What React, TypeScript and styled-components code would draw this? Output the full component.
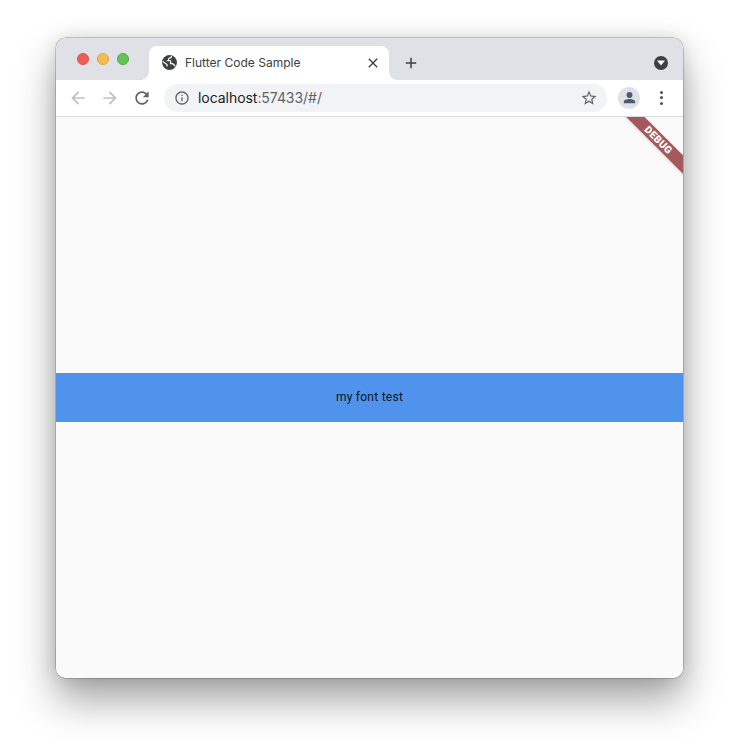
import React from "react";
import styled, { createGlobalStyle } from "styled-components";

const Global = createGlobalStyle`
  html, body { margin: 0; padding: 0; background: #fff; }
  body { width: 739px; height: 752px; overflow: hidden; font-family: Inter, "Liberation Sans", sans-serif; }
`;
const Page = styled.div`
  padding: 38px 0 0 56px;
`;
const Window = styled.div`
  width: 627px;
  height: 640px;
  border-radius: 10px;
  overflow: hidden;
  display: flex;
  flex-direction: column;
  background: #fafafa;
  box-shadow: 0 0 0 0.5px rgba(0,0,0,.35), 0 22px 40px rgba(0,0,0,.36), 0 0 18px rgba(0,0,0,.13);
`;
const TabStrip = styled.div`
  height: 42px;
  flex: none;
  background: #dfe1e6;
  display: flex;
  align-items: flex-end;
  padding-left: 21px;
  padding-right: 15px;
`;
const Lights = styled.div`
  display: flex;
  gap: 8px;
  align-self: flex-start;
  margin-top: 15px;
  width: 72px;
`;
const Light = styled.span<{ $c: string; $b: string }>`
  width: 12px;
  height: 12px;
  box-sizing: border-box;
  border-radius: 50%;
  background: ${p => p.$c};
  border: 0.5px solid ${p => p.$b};
`;
const Tab = styled.div`
  position: relative;
  width: 240px;
  height: 34px;
  box-sizing: border-box;
  background: #fff;
  border-radius: 8px 8px 0 0;
  display: flex;
  align-items: center;
  padding: 0 8px 1px 12px;
  color: #3c4043;
  &::before, &::after {
    content: "";
    position: absolute;
    bottom: 0;
    width: 8px;
    height: 8px;
    background: radial-gradient(circle at var(--cx) 0, #dfe1e6 7.5px, #fff 8px);
  }
  &::before { left: -8px; --cx: 0; }
  &::after { right: -8px; --cx: 100%; }
`;
const TabTitle = styled.span`
  flex: 1;
  margin-left: 7px;
  font-size: 12px;
  letter-spacing: 0.01px;
  white-space: nowrap;
`;
const Icon = styled.svg<{ $s?: number; $c?: string }>`
  width: ${p => p.$s ?? 16}px;
  height: ${p => p.$s ?? 16}px;
  fill: ${p => p.$c ?? "#5f6368"};
  flex: none;
  display: block;
`;
const NewTab = styled.div`
  margin-left: 13px;
  align-self: flex-start;
  margin-top: 16px;
  width: 18px;
  height: 18px;
`;
const Spring = styled.div`
  flex: 1;
`;
const Dropdown = styled.div`
  align-self: flex-start;
  margin-top: 18px;
  width: 14px;
  height: 14px;
  border-radius: 50%;
  background: #3c4043;
  display: flex;
  align-items: center;
  justify-content: center;
`;
const Toolbar = styled.div`
  height: 37px;
  flex: none;
  box-sizing: border-box;
  background: #fff;
  border-bottom: 1px solid #dadce0;
  display: flex;
  align-items: center;
  padding: 0 12px 1px 12px;
`;
const NavGroup = styled.div`
  display: flex;
  gap: 12px;
  margin-right: 12px;
`;
const Omnibox = styled.div`
  width: 443px;
  height: 28px;
  border-radius: 14px;
  background: #f1f3f4;
  display: flex;
  align-items: center;
  padding: 0 9px 0 10px;
  box-sizing: border-box;
`;
const Url = styled.span`
  flex: 1;
  margin-left: 8px;
  font-size: 14px;
  letter-spacing: -0.05px;
  color: #202124;
  white-space: nowrap;
`;
const UrlRest = styled.span`
  color: #5f6368;
`;
const Avatar = styled.div`
  width: 22px;
  height: 22px;
  margin-left: 11px;
  border-radius: 50%;
  background: #dfe1e6;
  display: flex;
  align-items: center;
  justify-content: center;
`;
const Kebab = styled.div`
  margin-left: 20px;
  display: flex;
  flex-direction: column;
  gap: 2.5px;
`;
const Dot = styled.span`
  width: 3px;
  height: 3px;
  border-radius: 50%;
  background: #50545a;
`;
const Content = styled.main`
  position: relative;
  flex: 1;
  overflow: hidden;
  background: #fafafa;
  display: flex;
  align-items: center;
`;
const Band = styled.div`
  width: 100%;
  height: 49px;
  box-sizing: border-box;
  padding-bottom: 2px;
  background: #5093ec;
  color: #0b1320;
  display: flex;
  align-items: center;
  justify-content: center;
  font-family: Roboto, sans-serif;
  font-size: 12px;
  letter-spacing: 0.25px;
`;
const Ribbon = styled.div`
  position: absolute;
  right: -36px;
  top: 17px;
  width: 120px;
  height: 12.7px;
  box-sizing: border-box;
  padding-right: 1px;
  background: #a45a5c;
  transform: rotate(45deg);
  color: #fff;
  font-family: Roboto, sans-serif;
  font-weight: 900;
  font-size: 10.2px;
  letter-spacing: 0.4px;
  line-height: 14px;
  text-align: center;
  box-shadow: 0 1px 3px rgba(0,0,0,.12);
`;

const P = {
  close: "M19 6.41L17.59 5 12 10.59 6.41 5 5 6.41 10.59 12 5 17.59 6.41 19 12 13.41 17.59 19 19 17.59 13.41 12z",
  plus: "M19 13h-6v6h-2v-6H5v-2h6V5h2v6h6v2z",
  back: "M20 11H7.83l5.59-5.59L12 4l-8 8 8 8 1.41-1.41L7.83 13H20v-2z",
  fwd: "M12 4l-1.41 1.41L16.17 11H4v2h12.17l-5.58 5.59L12 20l8-8z",
  reload: "M17.65 6.35C16.2 4.9 14.21 4 12 4c-4.42 0-7.99 3.58-7.99 8s3.57 8 7.99 8c3.73 0 6.84-2.55 7.73-6h-2.08c-.82 2.33-3.04 4-5.65 4-3.31 0-6-2.69-6-6s2.69-6 6-6c1.66 0 3.14.69 4.22 1.78L13 11h7V4l-2.35 2.35z",
  info: "M11 7h2v2h-2zm0 4h2v6h-2zm1-9C6.48 2 2 6.48 2 12s4.48 10 10 10 10-4.48 10-10S17.52 2 12 2zm0 18c-4.41 0-8-3.59-8-8s3.59-8 8-8 8 3.59 8 8-3.59 8-8 8z",
  star: "M22 9.24l-7.19-.62L12 2 9.19 8.63 2 9.24l5.46 4.73L5.82 21 12 17.27 18.18 21l-1.63-7.03L22 9.24zM12 15.4l-3.76 2.27 1-4.28-3.32-2.88 4.38-.38L12 6.1l1.71 4.04 4.38.38-3.32 2.88 1 4.28L12 15.4z",
  person: "M12 4.2a4.2 4.2 0 1 1 0 8.4 4.2 4.2 0 0 1 0-8.4zM12 14c3.6 0 8 1.4 8 3.6V20H4v-2.4C4 15.4 8.4 14 12 14z",
};

const Glyph = ({ d, s, c }: { d: string; s?: number; c?: string }) => (
  <Icon viewBox="0 0 24 24" $s={s} $c={c}><path d={d} /></Icon>
);

const Globe = () => (
  <Icon viewBox="0 0 24 24" $s={17} $c="#3c4043">
    <circle cx="12" cy="12" r="10.5" />
    <path
      d="M2.5 10.5 8.5 15v2.5M8 9.5h5.5v4.2h3l3.5 3.3M14.5 2.5c.8 2.2-.8 3.2-3 3.4-1 .2-1 2-1 3.6"
      fill="none"
      stroke="#fff"
      strokeWidth="1.7"
    />
  </Icon>
);

export default function App() {
  return (
    <Page>
      <Global />
      <Window>
        <TabStrip>
          <Lights>
            <Light $c="#ec5f57" $b="#d8534b" />
            <Light $c="#f5bd4f" $b="#dea63c" />
            <Light $c="#61c554" $b="#53ad46" />
          </Lights>
          <Tab>
            <Globe />
            <TabTitle>Flutter Code Sample</TabTitle>
            <Glyph d={P.close} s={16} c="#3c4043" />
          </Tab>
          <NewTab><Glyph d={P.plus} s={18} c="#3c4043" /></NewTab>
          <Spring />
          <Dropdown>
            <svg width="8" height="6" viewBox="0 0 8 6"><path d="M0 .5h8L4 5.5z" fill="#fff" /></svg>
          </Dropdown>
        </TabStrip>
        <Toolbar>
          <NavGroup>
            <Glyph d={P.back} s={20} c="#bdc1c6" />
            <Glyph d={P.fwd} s={20} c="#bdc1c6" />
            <Glyph d={P.reload} s={20} c="#5f6368" />
          </NavGroup>
          <Omnibox>
            <Glyph d={P.info} s={16} c="#5f6368" />
            <Url>localhost<UrlRest>:57433/#/</UrlRest></Url>
            <Glyph d={P.star} s={18} c="#5f6368" />
          </Omnibox>
          <Avatar><Glyph d={P.person} s={17} c="#4f5b73" /></Avatar>
          <Kebab><Dot /><Dot /><Dot /></Kebab>
        </Toolbar>
        <Content>
          <Band>my font test</Band>
          <Ribbon>DEBUG</Ribbon>
        </Content>
      </Window>
    </Page>
  );
}
